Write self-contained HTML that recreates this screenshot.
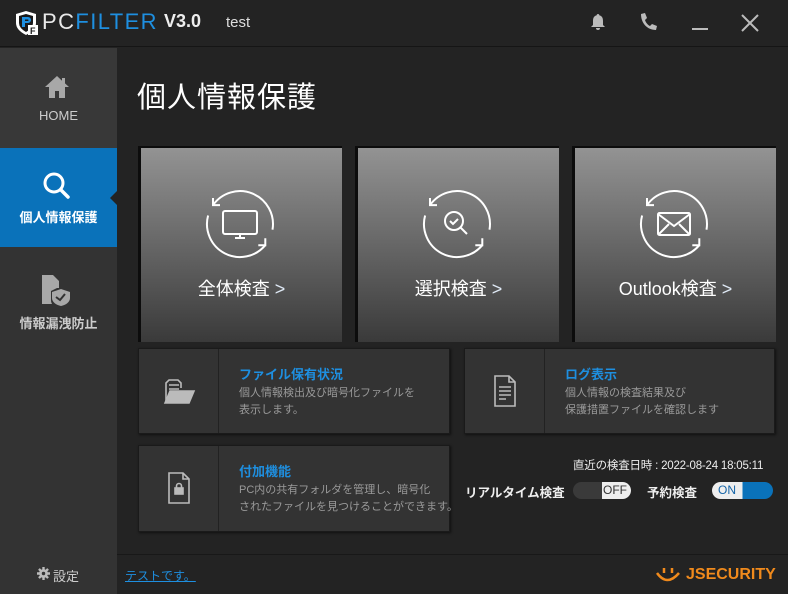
<!DOCTYPE html>
<html><head><meta charset="utf-8"><style>
*{margin:0;padding:0;box-sizing:border-box}
body{width:788px;height:594px;background:#232323;font-family:"Liberation Sans","Noto Sans CJK JP",sans-serif;position:relative;overflow:hidden;color:#fff}
.abs{position:absolute}
.top{left:0;top:0;width:788px;height:47px;background:#232323;border-bottom:1px solid #151515}
.side{left:0;top:48px;width:117px;height:546px;background:#333}
.big{width:204px;height:196px;border-top:2px solid #0c0c0c;border-left:3px solid #0c0c0c;background:linear-gradient(#939393,#3a3a3a)}
.big .lbl{position:absolute;left:0;right:0;top:127px;text-align:center;font-size:18px;color:#fff}
.big svg{position:absolute;left:59px;top:36px}
.sm{background:#333;border:1px solid #1a1a1a;box-shadow:1px 1px 2px #111}
.sm .div{position:absolute;left:79px;top:0;bottom:0;border-left:1px solid #222}
.sm .t{position:absolute;left:100px;top:15px;color:#1e8fe0;font-size:13px;font-weight:bold}
.sm .d{position:absolute;left:100px;top:36px;color:#9a9a9a;font-size:11px;line-height:17px;white-space:nowrap}
.sm svg{position:absolute;left:22px;top:24px}
.nav{color:#d8d8d8;font-size:13px;text-align:center;width:117px}
</style></head><body>
<div class="abs top"></div>
<svg class="abs" style="left:14px;top:10px" width="26" height="26" viewBox="0 0 26 26">
<path d="M2 4 L12 1 L22 4 L22 13 Q22 20 12 25 Q2 20 2 13 Z" fill="#fff"/>
<path d="M5 6 L12 4 L19 6 L19 13 Q19 18 12 22 Q5 18 5 13 Z" fill="#1a1a1a"/>
<path d="M8 7h6a3 3 0 0 1 0 6h-3v4h-3z M11 9.5v1.5h3a.8.8 0 0 0 0-1.5z" fill="#1e8fe0"/>
<rect x="14" y="15" width="10" height="10" fill="#fff"/><text x="16" y="24" font-size="9" font-weight="bold" fill="#222" font-family="Liberation Sans">F</text>
</svg>
<div class="abs" style="left:42px;top:9px;font-size:22px;letter-spacing:1.4px"><span style="color:#e8e8e8">PC</span><span style="color:#1e8fe0">FILTER</span></div>
<div class="abs" style="left:164px;top:11px;font-size:18px;font-weight:bold;color:#eee">V3.0</div>
<div class="abs" style="left:226px;top:14px;font-size:15px;color:#ddd">test</div>
<svg class="abs" style="left:588px;top:12px" width="20" height="20" viewBox="0 0 20 20"><path d="M10 2a1.3 1.3 0 0 1 1.3 1.3C14 4 15 6 15 9v4l2 2H3l2-2V9c0-3 1-5 3.7-5.7A1.3 1.3 0 0 1 10 2z M8 16h4a2 2 0 0 1-4 0z" fill="#bbb"/></svg>
<svg class="abs" style="left:637px;top:11px" width="22" height="22" viewBox="0 0 22 22"><path d="M4 3l4-1 2 5-2 2c1 3 3 5 5 6l2-2 5 2-1 4c-9 0-15-7-15-16z" fill="#bbb"/></svg>
<div class="abs" style="left:692px;top:28px;width:16px;height:2px;background:#bbb"></div>
<svg class="abs" style="left:740px;top:13px" width="20" height="20"><path d="M2 2L18 18M18 2L2 18" stroke="#bbb" stroke-width="2"/></svg>

<div class="abs side"></div>
<div class="abs" style="left:0;top:48px;width:117px;height:100px;background:#383838"></div>
<svg class="abs" style="left:43px;top:74px" width="28" height="26" viewBox="0 0 28 26"><path d="M14 2L2 13h4v11h6v-7h4v7h6V13h4l-4-3.6V4h-3v2.7z" fill="#a8a8a8"/></svg>
<div class="abs nav" style="top:108px;font-size:13px;color:#ccc">HOME</div>
<div class="abs" style="left:0;top:148px;width:117px;height:99px;background:#0a72ba"></div>
<div class="abs" style="left:110px;top:191px;width:0;height:0;border-top:7px solid transparent;border-bottom:7px solid transparent;border-right:7px solid #232323"></div>
<svg class="abs" style="left:42px;top:171px" width="30" height="30"><circle cx="12" cy="12" r="9" stroke="#fff" stroke-width="3" fill="none"/><path d="M19 19L26 26" stroke="#fff" stroke-width="3.5" stroke-linecap="round"/></svg>
<div class="abs nav" style="top:207px;color:#fff;font-weight:bold">個人情報保護</div>
<svg class="abs" style="left:40px;top:273px" width="34" height="34" viewBox="0 0 34 34"><path d="M2 2h11l6 6v7h-2l-6 3v9c0 2 .5 3 1 4H2z" fill="#a8a8a8"/><path d="M21 16l9 3v6c0 4-4 7-9 8-5-1-9-4-9-8v-6z" fill="#a8a8a8"/><path d="M16 24l4 3 5-6" stroke="#333" stroke-width="2" fill="none"/></svg>
<div class="abs nav" style="top:313px;color:#ccc;font-weight:bold">情報漏洩防止</div>
<svg class="abs" style="left:37px;top:567px" width="13" height="13" viewBox="0 0 12 12"><circle cx="6" cy="6" r="4" fill="#bbb"/><path d="M6 0v12M0 6h12M1.8 1.8l8.4 8.4M10.2 1.8l-8.4 8.4" stroke="#bbb" stroke-width="2.2"/><circle cx="6" cy="6" r="1.6" fill="#333"/></svg>
<div class="abs" style="left:53px;top:566px;font-size:13px;color:#ccc">設定</div>

<div class="abs" style="left:137px;top:74px;font-size:29px;letter-spacing:1px">個人情報保護</div>

<div class="abs big" style="left:138px;top:146px">
<svg width="80" height="80" viewBox="0 0 80 80" fill="none" stroke="#fff" stroke-width="2"><path d="M72.5 45.7A33 33 0 0 0 13 21.1M8.1 31.5A33 33 0 0 0 65.3 61.2"/><path d="M20 21.1H13V14M58.3 61.2h7v-7"/><rect x="23" y="27" width="34" height="23" rx="2"/><path d="M35 54h10M40 50v4"/></svg>
<div class="lbl">全体検査 <span style="color:#dfe9f5">&gt;</span></div></div>
<div class="abs big" style="left:355px;top:146px">
<svg width="80" height="80" viewBox="0 0 80 80" fill="none" stroke="#fff" stroke-width="2"><path d="M72.5 45.7A33 33 0 0 0 13 21.1M8.1 31.5A33 33 0 0 0 65.3 61.2"/><path d="M20 21.1H13V14M58.3 61.2h7v-7"/><circle cx="37" cy="37" r="9"/><path d="M43.5 43.5L50 50"/><path d="M33 37l3 3 5-5"/></svg>
<div class="lbl">選択検査 <span style="color:#dfe9f5">&gt;</span></div></div>
<div class="abs big" style="left:572px;top:146px">
<svg width="80" height="80" viewBox="0 0 80 80" fill="none" stroke="#fff" stroke-width="2"><path d="M72.5 45.7A33 33 0 0 0 13 21.1M8.1 31.5A33 33 0 0 0 65.3 61.2"/><path d="M20 21.1H13V14M58.3 61.2h7v-7"/><rect x="24" y="29" width="32" height="22" rx="1.5"/><path d="M24 30l16 12 16-12M24 51l11-11M56 51L45 40"/></svg>
<div class="lbl">Outlook検査 <span style="color:#dfe9f5">&gt;</span></div></div>

<div class="abs sm" style="left:138px;top:348px;width:312px;height:86px"><div class="div"></div>
<svg width="36" height="36" viewBox="0 0 36 36" fill="none" stroke="#bbb" stroke-width="1.6"><path d="M5 28V10l3-3h9l3 3v5"/><path d="M8 12h10M8 16h10"/><path d="M4 30L9 18h24l-5 12z" fill="#bbb"/></svg>
<div class="t">ファイル保有状況</div><div class="d">個人情報検出及び暗号化ファイルを<br>表示します。</div></div>
<div class="abs sm" style="left:464px;top:348px;width:311px;height:86px"><div class="div"></div>
<svg width="36" height="36" viewBox="0 0 36 36" fill="none" stroke="#bbb" stroke-width="1.6"><path d="M8 3h14l6 6v24H8z"/><path d="M22 3v6h6"/><path d="M12 14h12M12 18h12M12 22h12M12 26h7"/></svg>
<div class="t">ログ表示</div><div class="d">個人情報の検査結果及び<br>保護措置ファイルを確認します</div></div>
<div class="abs sm" style="left:138px;top:445px;width:312px;height:87px"><div class="div"></div>
<svg width="36" height="36" viewBox="0 0 36 36" fill="none" stroke="#bbb" stroke-width="1.6"><path d="M8 3h14l6 6v24H8z"/><path d="M22 3v6h6"/><rect x="14" y="18" width="8" height="6" fill="#bbb"/><path d="M15.5 18v-2a2.5 2.5 0 0 1 5 0v2"/></svg>
<div class="t">付加機能</div><div class="d">PC内の共有フォルダを管理し、暗号化<br>されたファイルを見つけることができます。</div></div>

<div class="abs" style="left:573px;top:457px;font-size:11.5px;color:#eee;letter-spacing:-0.2px">直近の検査日時 : 2022-08-24 18:05:11</div>
<div class="abs" style="left:465px;top:482px;font-size:12.5px;font-weight:bold;color:#eee">リアルタイム検査</div>
<div class="abs" style="left:573px;top:482px;width:58px;height:17px;border-radius:9px;background:linear-gradient(90deg,#3a3a3a 50%,#eee 50%);overflow:hidden"><span style="position:absolute;left:30px;top:1px;font-size:12px;color:#333">OFF</span></div>
<div class="abs" style="left:647px;top:482px;font-size:12.5px;font-weight:bold;color:#eee">予約検査</div>
<div class="abs" style="left:712px;top:482px;width:61px;height:17px;border-radius:9px;background:linear-gradient(90deg,#eee 50%,#0a72ba 50%)"><span style="position:absolute;left:6px;top:1px;font-size:12px;color:#1565a8">ON</span></div>

<div class="abs" style="left:117px;top:554px;width:671px;height:1px;background:#181818"></div>
<div class="abs" style="left:125px;top:567px;font-size:12px;color:#1e8fe0;text-decoration:underline">テストです。</div>
<svg class="abs" style="left:655px;top:565px" width="30" height="20"><path d="M2 8Q12 22 24 8" stroke="#f08a1c" stroke-width="2.5" fill="none"/><path d="M9 3v5M17 3v5" stroke="#f08a1c" stroke-width="2.5"/></svg>
<div class="abs" style="left:686px;top:566px;font-size:16px;font-weight:bold;color:#f08a1c">JSECURITY</div>
</body></html>
